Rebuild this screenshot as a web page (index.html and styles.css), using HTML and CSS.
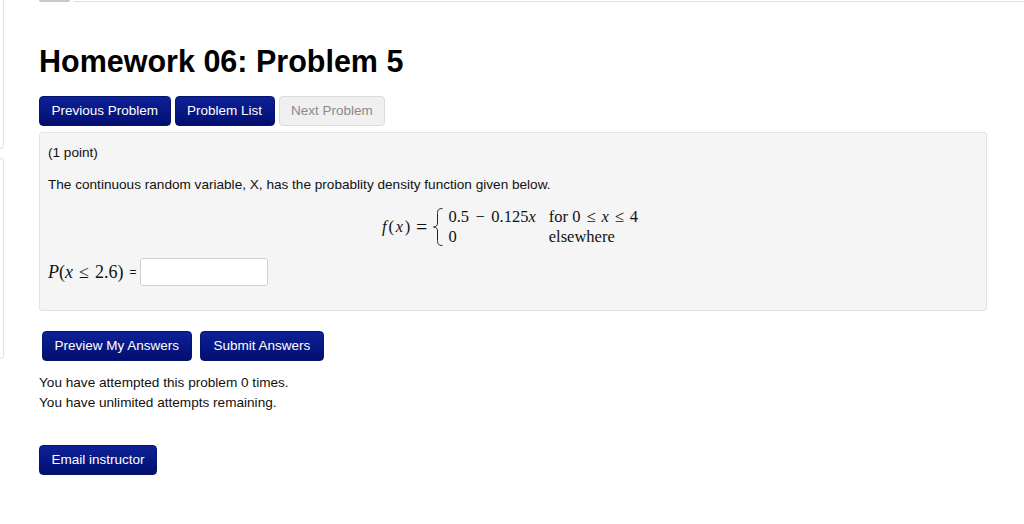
FILE: index.html
```html
<!DOCTYPE html>
<html>
<head>
<meta charset="utf-8">
<link rel="stylesheet" href="styles.css">
</head>
<body>
<div class="page">
  <div class="edge">
    <div class="edge-box edge-top"></div>
    <div class="edge-box edge-mid"></div>
  </div>
  <div class="main">
    <div class="topbar">
      <div class="top-btn"></div>
      <div class="top-field"></div>
    </div>
    <h1 class="title">Homework 06: Problem 5</h1>
    <div class="nav">
      <span class="btn">Previous Problem</span>
      <span class="btn">Problem List</span>
      <span class="btn btn-disabled">Next Problem</span>
    </div>
    <div class="problem">
      <p class="points">(1 point)</p>
      <p class="stmt">The continuous random variable, X, has the probablity density function given below.</p>
      <div class="formula">
        <span class="fx"><span class="mi">f</span><span class="mo">(</span><span class="mi">x</span><span class="mo">)</span></span><span class="eq">=</span>
        <svg class="brace" width="14" height="40" viewBox="0 0 14 40"><path d="M11.5 1.5 C7.5 1.5 6.5 3 6.5 6.5 L6.5 16 C6.5 18.5 5.5 19.6 2.5 20 C5.5 20.4 6.5 21.5 6.5 24 L6.5 33.5 C6.5 37 7.5 38.5 11.5 38.5" fill="none" stroke="#222" stroke-width="1"/></svg>
        <div class="cases">
          <span>0.5<span class="bin">−</span>0.125<i>x</i></span><span>for 0<span class="rel">≤</span><i>x</i><span class="rel">≤</span>4</span>
          <span>0</span><span>elsewhere</span>
        </div>
      </div>
      <div class="answer">
        <span class="expr"><i>P</i>(<i>x</i><span class="rel">≤</span>2.6)</span><span class="ans-eq">=</span>
        <span class="input"></span>
      </div>
    </div>
    <div class="actions">
      <span class="btn">Preview My Answers</span>
      <span class="btn btn-wide">Submit Answers</span>
    </div>
    <p class="info">You have attempted this problem 0 times.<br>You have unlimited attempts remaining.</p>
    <span class="btn email">Email instructor</span>
  </div>
</div>
</body>
</html>
```
FILE: styles.css
```css
html, body {
  margin: 0;
  padding: 0;
  background: #ffffff;
}
body {
  font-family: "Liberation Sans", Arial, sans-serif;
  color: #111;
  width: 1024px;
  height: 524px;
  overflow: hidden;
}
.page {
  display: flex;
}
.edge {
  width: 4px;
  display: flex;
  flex-direction: column;
}
.edge-box {
  border-right: 1px solid #e2e2e2;
  border-bottom: 1px solid #e2e2e2;
  background: #fff;
}
.edge-top {
  height: 148px;
  border-bottom-right-radius: 4px;
}
.edge-mid {
  margin-top: 9px;
  height: 199px;
  border-top: 1px solid #e2e2e2;
  border-radius: 0 4px 4px 0;
}
.main {
  margin-left: 35px;
  flex: 1;
}
.topbar {
  display: flex;
  height: 3px;
  gap: 4px;
  margin-left: -40px;
}
.top-btn {
  margin-left: 40px;
  width: 31px;
  height: 2px;
  background: #c8c8c8;
  border-radius: 0 0 3px 3px;
}
.top-field {
  flex: 1;
  height: 1px;
  margin-top: 1px;
  background: #e0e0e0;
}
.title {
  margin: 40px 0 0 0;
  font-size: 30.5px;
  font-weight: bold;
  line-height: 36px;
  color: #000;
}
.nav {
  display: flex;
  gap: 4px;
  margin-top: 17px;
}
.btn {
  display: inline-block;
  box-sizing: border-box;
  height: 30px;
  line-height: 28px;
  padding: 0 11.5px;
  font-size: 13.5px;
  color: #fff;
  background: linear-gradient(#0d2197, #020f70);
  border: 1px solid #06146e;
  border-radius: 4px;
}
.btn-wide {
  padding: 0 13px;
}
.btn-disabled {
  background: #f0f0f0;
  border-color: #dcdcdc;
  color: #8a8a8a;
}
.problem {
  margin-top: 6px;
  width: 948px;
  box-sizing: border-box;
  height: 179px;
  background: #f5f5f5;
  border: 1px solid #e3e3e3;
  border-radius: 3px;
  padding: 12px 8px 0 8px;
  font-size: 13.6px;
}
.points {
  margin: 0;
  line-height: 16px;
}
.stmt {
  margin: 16px 0 0 0;
  line-height: 16px;
}
.formula {
  display: flex;
  align-items: center;
  margin: 14px 0 0 334px;
  font-family: "Liberation Serif", "Times New Roman", serif;
  font-size: 16.5px;
  color: #111;
}
.fx {
  letter-spacing: 1.8px;
}
.mi {
  font-style: italic;
}
.eq {
  font-size: 20px;
  line-height: 20px;
  margin: 0 4px 0 4px;
}
.brace {
  display: block;
}
.bin {
  margin: 0 6.5px;
}
.rel {
  margin: 0 6px;
}
.cases {
  display: grid;
  grid-template-columns: auto auto;
  column-gap: 13px;
  row-gap: 0;
  line-height: 20px;
  margin-left: 3px;
}
.answer {
  display: flex;
  align-items: center;
  margin-top: 11px;
}
.expr {
  font-family: "Liberation Serif", "Times New Roman", serif;
  font-size: 18px;
}
.ans-eq {
  font-size: 12px;
  margin: 0 4px 0 6px;
}
.input {
  display: block;
  box-sizing: border-box;
  width: 128px;
  height: 28px;
  background: #fff;
  border: 1px solid #cfcfcf;
  border-radius: 3px;
}
.actions {
  display: flex;
  gap: 8px;
  margin: 20px 0 0 3px;
}
.info {
  margin: 12px 0 0 0;
  font-size: 13.6px;
  line-height: 20px;
}
.email {
  margin-top: 32px;
}
```
